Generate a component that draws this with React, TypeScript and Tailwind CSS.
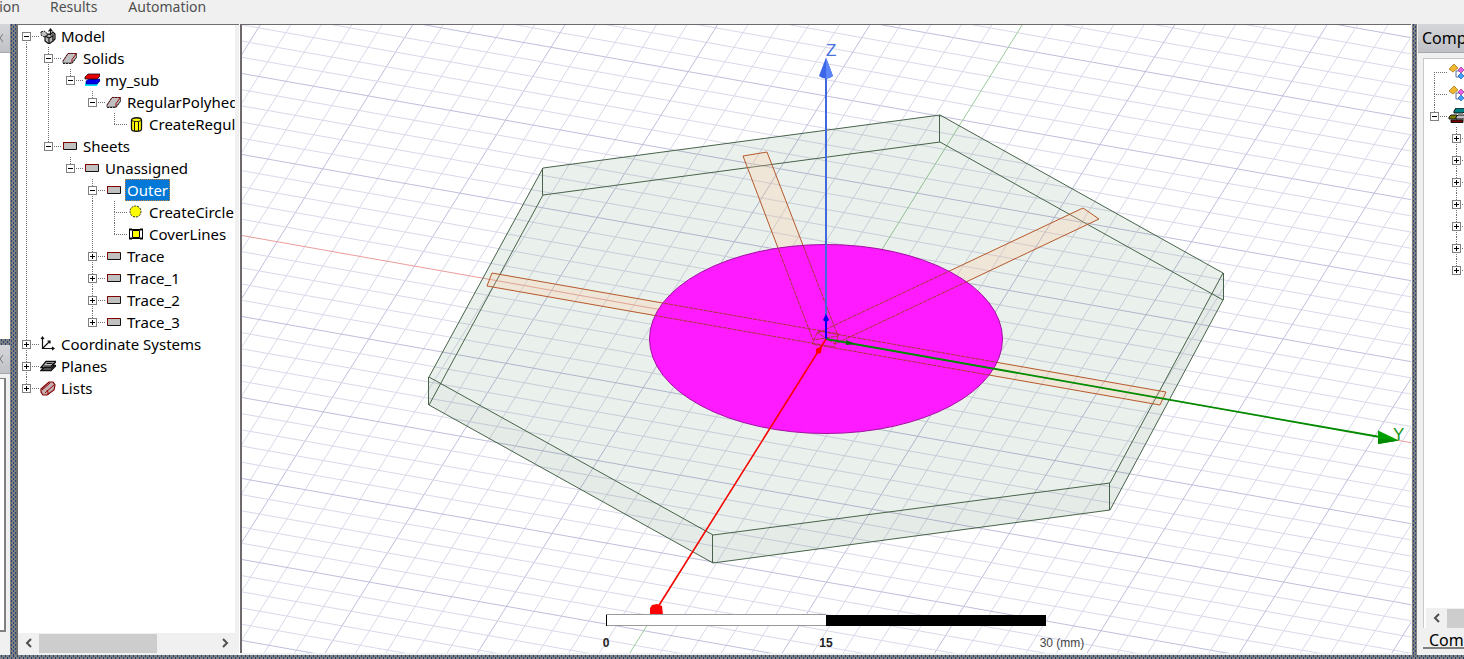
import React from "react";

type IconName =
  | "model" | "solid" | "stack" | "cylinder" | "sheet" | "circle" | "cover"
  | "axes" | "planes" | "lists" | "link" | "layers";

type RowData = {
  label?: string;
  level: number;
  guides: number[];
  node: "minus" | "plus" | "leaf";
  up?: boolean;
  down?: boolean;
  icon?: IconName;
  selected?: boolean;
};

const modelRows: RowData[] = [
  { label: "Model", level: 0, guides: [], node: "minus", down: true, icon: "model" },
  { label: "Solids", level: 1, guides: [0], node: "minus", up: true, down: true, icon: "solid" },
  { label: "my_sub", level: 2, guides: [0, 1], node: "minus", up: true, icon: "stack" },
  { label: "RegularPolyhedron", level: 3, guides: [0, 1], node: "minus", up: true, icon: "solid" },
  { label: "CreateRegularPolyhedron", level: 4, guides: [0, 1], node: "leaf", up: true, icon: "cylinder" },
  { label: "Sheets", level: 1, guides: [0], node: "minus", up: true, icon: "sheet" },
  { label: "Unassigned", level: 2, guides: [0], node: "minus", up: true, icon: "sheet" },
  { label: "Outer", level: 3, guides: [0], node: "minus", up: true, down: true, icon: "sheet", selected: true },
  { label: "CreateCircle", level: 4, guides: [0, 3], node: "leaf", up: true, down: true, icon: "circle" },
  { label: "CoverLines", level: 4, guides: [0, 3], node: "leaf", up: true, icon: "cover" },
  { label: "Trace", level: 3, guides: [0], node: "plus", up: true, down: true, icon: "sheet" },
  { label: "Trace_1", level: 3, guides: [0], node: "plus", up: true, down: true, icon: "sheet" },
  { label: "Trace_2", level: 3, guides: [0], node: "plus", up: true, down: true, icon: "sheet" },
  { label: "Trace_3", level: 3, guides: [0], node: "plus", up: true, icon: "sheet" },
  { label: "Coordinate Systems", level: 0, guides: [], node: "plus", up: true, down: true, icon: "axes" },
  { label: "Planes", level: 0, guides: [], node: "plus", up: true, down: true, icon: "planes" },
  { label: "Lists", level: 0, guides: [], node: "plus", up: true, icon: "lists" },
];

const componentRows: RowData[] = [
  { level: 0, guides: [], node: "leaf", down: true, icon: "link" },
  { level: 0, guides: [], node: "leaf", up: true, down: true, icon: "link" },
  { level: 0, guides: [], node: "minus", up: true, icon: "layers" },
  ...Array.from({ length: 7 }, (_, i): RowData => ({
    level: 1, guides: [], node: "plus", up: true, down: i < 6,
  })),
];

function Icon({ name }: { name?: IconName }) {
  const art: Record<IconName, React.ReactNode> = {
    model: (
      <>
        <path d="M5 8l4-2 4 2v5l-4 3-4-3z" fill="#b8b8b8" stroke="#111" strokeWidth="1.200" />
        <path d="M1 4l3-1 3 2v3L4 9 1 7z" fill="#c0c0c0" stroke="#111" strokeDasharray="2 1" />
        <path d="M11 6l2-2 2 2v5l-2 2" fill="#c0c0c0" stroke="#111" strokeWidth="1.200" />
        <path d="M5 8l4 2 4-2M9 10v5M10.500 7V1M8.500 3.500L10.500 1l2 2.500M13 6v6" fill="none" stroke="#111" strokeWidth="1.200" />
      </>
    ),
    solid: (
      <>
        <path d="M1 13L1 11L6 3.500h8.500V7L10 13z" fill="#c0c0c0" stroke="#555" />
        <path d="M1 11L6 3.500h8.500" fill="none" stroke="#700000" strokeDasharray="2 1" />
        <path d="M14.500 3.500L10 9.500V13" fill="none" stroke="#900000" />
        <path d="M1 13.500h9L14.500 7.500" fill="none" stroke="#222" strokeDasharray="2 1" />
      </>
    ),
    stack: (
      <>
        <path d="M3 10h12l-2 4H1v-2z" fill="#00e5ff" />
        <path d="M2 9l3-2h11v2l-3 3H2z" fill="#0000e8" stroke="#000080" strokeWidth=".6" />
        <path d="M1 5l3-3h12v2l-3 3H1z" fill="#e80000" stroke="#111" strokeWidth=".8" />
      </>
    ),
    cylinder: (
      <>
        <path d="M3.500 4c0-3 10-3 10 0v9c0 3-10 3-10 0z" fill="#ff0" stroke="#111" strokeWidth="1.300" />
        <path d="M3.500 4c1 2 9 2 10 0M6.500 6v9M10.500 6v9" fill="none" stroke="#111" />
      </>
    ),
    sheet: (
      <>
        <path d="M1.500 4.500h13v7h-13z" fill="#c0c0c0" stroke="#111" />
        <path d="M1.500 11V4.500H14" fill="none" stroke="#800000" />
      </>
    ),
    circle: <circle cx="7.500" cy="7.500" r="5.500" fill="#ff0" stroke="#222" strokeDasharray="2 1" />,
    cover: (
      <>
        <path d="M1.500 3.500h13v9h-13z" fill="#fff" stroke="#000" />
        <path d="M4.500 4.500h7v7h-7z" fill="#ff0" stroke="#000" />
        <path d="M1 3.500h3M12 3.500h3M1 12.500h3M12 12.500h3" stroke="#000" strokeWidth="2" />
      </>
    ),
    axes: (
      <path d="M2.500 1v11.500H14M1 3l1.500-2L4 3M12 11l2 1.500-2 1.500M3 12l7-7M7.500 5H10v2.500" fill="none" stroke="#111" strokeWidth="1.200" />
    ),
    planes: (
      <>
        <path d="M1 12.500l5-5h10l-5 5z" fill="#bbb" stroke="#111" strokeWidth="1.300" />
        <path d="M1 9.500l5-6h10l-5 6z" fill="#c4c4c4" stroke="#111" strokeWidth="1.300" />
        <path d="M4 8h7l3-3M6.500 5.500h6M2 11h9l4-4" fill="none" stroke="#111" />
      </>
    ),
    lists: (
      <>
        <path d="M1 9l8-7h4l2 3-1 5-7 5H3l-2-3z" fill="#c4b0b0" stroke="#800000" strokeWidth="1.200" />
        <path d="M2 10l8-7M5 13l9-8M7 10l1 2v3" fill="none" stroke="#900" />
      </>
    ),
    link: (
      <>
        <path d="M8 7v6h4M8 7h4" fill="none" stroke="#5a6ea0" />
        <path d="M1 5l5-5 4 4-5 4z" fill="#f0b830" stroke="#a87818" strokeWidth=".8" />
        <path d="M10 6l3-3 3 3-3 3z" fill="#e860e0" stroke="#903090" strokeWidth=".7" />
        <path d="M10 12l3-3 3 3-3 3z" fill="#40a0ff" stroke="#2060a0" strokeWidth=".7" />
      </>
    ),
    layers: (
      <>
        <path d="M3 12h12v2.500H3z" fill="#800000" stroke="#111" />
        <path d="M6 3l2-3h9v3l-2 2H6z" fill="#008080" stroke="#111" />
        <path d="M1 9l2-2h6v4H1z" fill="#808000" stroke="#111" />
        <path d="M8 9l2-2h7v4H8z" fill="#c0c0c0" stroke="#111" />
      </>
    ),
  };
  return (
    <svg viewBox="0 0 16 16" className="h-4 w-4 shrink-0" aria-hidden="true">
      {name ? art[name] : null}
    </svg>
  );
}

const dots = { stroke: "#707070", strokeDasharray: "1 1", shapeRendering: "crispEdges" as const, fill: "none" };

function Guide({ on }: { on: boolean }) {
  return (
    <svg viewBox="0 0 22 22" className="h-[22px] w-[22px] shrink-0" aria-hidden="true">
      {on && <path d="M4.500 0V22" {...dots} />}
    </svg>
  );
}

function Toggle({ row }: { row: RowData }) {
  const boxed = row.node !== "leaf";
  return (
    <svg viewBox="0 0 18 22" className="h-[22px] w-[18px] shrink-0" aria-hidden="true">
      {row.up && <path d="M4.500 0V11" {...dots} />}
      {row.down && <path d="M4.500 11V22" {...dots} />}
      <path d="M4 11.500H17" {...dots} />
      {boxed && (
        <g shapeRendering="crispEdges">
          <rect x=".5" y="7.500" width="8" height="8" fill="#fff" stroke="#808080" />
          <path d="M2 11.500h5" stroke="#000" />
          {row.node === "plus" && <path d="M4.500 9v5" stroke="#000" />}
        </g>
      )}
    </svg>
  );
}

function Tree({ rows, label }: { rows: RowData[]; label: string }) {
  return (
    <ul role="tree" aria-label={label} className="min-h-0 flex-1 overflow-hidden pl-1">
      {rows.map((row, i) => (
        <li key={i} role="treeitem" aria-level={row.level + 1} aria-selected={!!row.selected} className="flex h-[22px] items-center whitespace-nowrap">
          {Array.from({ length: row.level }, (_, g) => (
            <Guide key={g} on={row.guides.includes(g)} />
          ))}
          <Toggle row={row} />
          <Icon name={row.icon} />
          {row.label && (
            <span className={row.selected ? "ml-[3px] border border-dotted border-[#d08030] bg-[#0078d7] px-px leading-5 text-white" : "ml-[3px] px-0.5 leading-5"}>
              {row.label}
            </span>
          )}
        </li>
      ))}
    </ul>
  );
}

const hatch =
  "bg-[#808080] bg-[conic-gradient(from_270deg_at_1px_2px,#26447a_90deg,transparent_0),conic-gradient(from_270deg_at_1px_2px,#26447a_90deg,transparent_0)] bg-[size:4px_4px] bg-[position:1px_0px,3px_2px]";

function Chevron({ left }: { left?: boolean }) {
  return (
    <svg viewBox="0 0 10 10" className="h-2.5 w-2.5" aria-hidden="true">
      <path d={left ? "M7 1L3 5l4 4" : "M3 1l4 4-4 4"} fill="none" stroke="#505050" strokeWidth="2" />
    </svg>
  );
}

const OX = 826;
const OY = 339;
const SLOPE = 0.1772;
const LEAN = 0.6247;

function Grid() {
  const lines: React.ReactNode[] = [];
  for (let k = -50; k <= 50; k++) {
    if (k === 0) continue;
    const major = k % 5 === 0;
    const color = major ? "#bfbfdc" : "#d9d9ea";
    const y = OY + k * 16.2;
    lines.push(<path key={"a" + k} d={`M-174 ${y - 1000 * SLOPE}L1826 ${y + 1000 * SLOPE}`} stroke={color} />);
    const x = OX + k * 30.48;
    lines.push(<path key={"b" + k} d={`M${x + 600 * LEAN} ${OY - 600}L${x - 600 * LEAN} ${OY + 600}`} stroke={color} />);
  }
  return <g fill="none">{lines}</g>;
}

const traces = [
  "M492 273L839 334L834 347L487 286Z",
  "M818 331L1166 392L1160 405L812 344Z",
  "M743 156L767 152L838 336L813 340Z",
  "M1083 208L1099 219L835 344L818 333Z",
];

function Viewport() {
  return (
    <svg viewBox="242 25 1169 628" preserveAspectRatio="xMidYMid slice" className="h-full w-full" role="img" aria-label="3D model view">
      <Grid />
      <path d={`M-174 ${OY - 1000 * SLOPE}L1826 ${OY + 1000 * SLOPE}`} stroke="#eb9c9c" />
      <path d={`M${OX + 600 * LEAN} ${OY - 600}L${OX - 600 * LEAN} ${OY + 600}`} stroke="#9ccb9c" />

      <path d="M543 168L940 115L1223 273V300L1110 510L713 563L429 405V377Z" fill="#2f6b3c" fillOpacity=".1" />
      <path d="M429 377L713 535L1110 483L1223 273V300L1110 510L713 563L429 405Z" fill="#555" fillOpacity=".03" />
      <g fill="none" stroke="#47624a">
        <path d="M543 168L940 115L1223 273L1110 483L713 535L429 377Z" />
        <path d="M543 195L940 142L1223 300L1110 510L713 563L429 405Z" />
        <path d="M542.500 168V195M939.500 115V142M1223.500 273V300M1109.500 483V510M712.500 535V563M428.500 377V405" />
      </g>

      {traces.map((d) => (
        <path key={d} d={d} fill="#ffc8a0" fillOpacity=".25" stroke="#b5592c" />
      ))}
      <ellipse cx="826" cy="339" rx="176.500" ry="94.500" fill="#ff14ff" fillOpacity=".97" stroke="#a010a0" />
      <clipPath id="disc">
        <ellipse cx="826" cy="339" rx="176" ry="94" />
      </clipPath>
      <g clipPath="url(#disc)" fill="none" stroke="#a83a38">
        {traces.map((d) => (
          <path key={d} d={d} strokeDasharray="4 1" />
        ))}
      </g>

      <path d="M826 339L1380 437" stroke="#008c00" strokeWidth="1.800" />
      <path d="M1378 430.500L1399 440.500L1378 444Z" fill="#00a000" />
      <path d="M1378 439L1399 440.500L1378 444Z" fill="#008800" />
      <path d="M846 340l9 4-9 1z" fill="#007000" />

      <path d="M826 339V76" stroke="#3f69dc" strokeWidth="2" />
      <path d="M826 57.500L819 76Q826 81 833 76Z" fill="#3c66e8" />
      <path d="M826 57.500L826 79Q831 78 833 76Z" fill="#5b86f8" />
      <path d="M826 339V318" stroke="#0000f0" strokeWidth="2" />
      <path d="M826 314L823 320Q826 323 829 320Z" fill="#0000f0" />

      <path d="M826 339L656 610" stroke="#f00" strokeWidth="1.500" />
      <path d="M822 346l-1 7-5 1v-5z" fill="#f00" />
      <path d="M650 608l2-3 5-1 5 2 1 9h-13z" fill="#f00" />

      <rect x="606" y="614" width="220" height="12" fill="#999" />
      <rect x="606" y="615" width="220" height="10" fill="#fff" />
      <path d="M606.500 615V626" stroke="#000" />
      <rect x="826" y="615" width="220" height="11" fill="#000" />

      <g fontFamily="'Liberation Sans', Arial, sans-serif">
        <text x="826" y="56" fontSize="17" fill="#4a72dc">Z</text>
        <text x="1393" y="440" fontSize="17" fill="#189418">Y</text>
        <g fontSize="12" fill="#222">
          <text x="606" y="647" textAnchor="middle" fontWeight="700">0</text>
          <text x="826" y="647" textAnchor="middle" fontWeight="700">15</text>
          <text x="1062" y="647" textAnchor="middle" fill="#444">30 (mm)</text>
        </g>
      </g>
    </svg>
  );
}

const captionBar = "h-[29px] shrink-0 border-b border-[#a9a9ad] bg-linear-to-b from-[#d5d6d9] to-[#bfc1c6]";

function CaptionChevron() {
  return (
    <svg viewBox="0 0 3 8" className="h-2 w-[3px]" aria-hidden="true">
      <path d="M3 0L0 4l3 4" fill="none" stroke="#777" />
    </svg>
  );
}

export default function App() {
  return (
    <div className="flex h-screen flex-col overflow-hidden bg-[#f0f0f0] text-[15px] text-black" style={{ fontFamily: "'Noto Sans', sans-serif" }}>
      <nav className="flex h-6 shrink-0 items-start text-sm leading-[14px] text-[#4f4f4f]">
        <a href="#simulation" className="flex w-5 justify-end">Simulation</a>
        <a href="#results" className="ml-[30px]">Results</a>
        <a href="#automation" className="ml-[31px]">Automation</a>
      </nav>

      <main className="flex min-h-0 flex-1">
        <aside className="flex w-2.5 shrink-0 flex-col overflow-hidden">
          <div className={captionBar + " flex items-center"}>
            <CaptionChevron />
          </div>
          <div className="h-[286px] shrink-0 bg-white" />
          <div className={"h-1.5 shrink-0 " + hatch} />
          <div className={captionBar + " flex items-center"}>
            <CaptionChevron />
          </div>
          <div className="mt-1 mr-1 mb-[23px] flex-1 border-t border-r-2 border-b-2 border-[#808080] bg-white" />
        </aside>
        <div className={"w-1.5 shrink-0 " + hatch} />

        <section className="flex w-[223px] shrink-0 flex-col border-t border-l-2 border-[#707070] bg-[#f0f0f0] pr-1">
          <div className="flex min-h-0 flex-1 flex-col bg-white">
            <Tree rows={modelRows} label="Model" />
          </div>
          <div className="mb-[2px] flex h-5 shrink-0 items-center">
            <button aria-label="Scroll left" className="flex w-[21px] justify-center"><Chevron left /></button>
            <div className="h-[19px] w-[118px] bg-[#cdcdcd]" />
            <button aria-label="Scroll right" className="ml-auto flex w-[21px] justify-center"><Chevron /></button>
          </div>
        </section>

        <div className="flex min-w-0 flex-1 flex-col border-l border-white">
          <div className="min-h-0 flex-1 overflow-hidden border-t border-l-2 border-[#6d696d] bg-white">
            <Viewport />
          </div>
          <div className="h-[2px] shrink-0 bg-[#f0f0f0]" />
        </div>
        <div className={"ml-px w-[5px] shrink-0 " + hatch} />

        <aside className="flex w-[47px] shrink-0 flex-col overflow-hidden border-l border-[#f0f0f0]">
          <h2 className={captionBar + " flex items-center pl-1 text-base"}>Components</h2>
          <div className="mt-[5px] ml-[5px] flex min-h-0 flex-1 flex-col border-t border-l border-[#c8c8c8] bg-white pt-[2px] pl-[2px]">
            <Tree rows={componentRows} label="Components" />
            <div className="flex h-5 shrink-0 items-center bg-[#f0f0f0]">
              <button aria-label="Scroll left" className="flex w-[21px] shrink-0 justify-center"><Chevron left /></button>
              <div className="h-[19px] flex-1 bg-[#cdcdcd]" />
            </div>
          </div>
          <button className="mb-[6px] ml-[5px] flex h-[21px] shrink-0 items-center border-b-2 border-[#808080] pt-1 pl-1.5 text-base">Components</button>
        </aside>
      </main>
      <div className={"h-1 shrink-0 " + hatch} />
    </div>
  );
}
